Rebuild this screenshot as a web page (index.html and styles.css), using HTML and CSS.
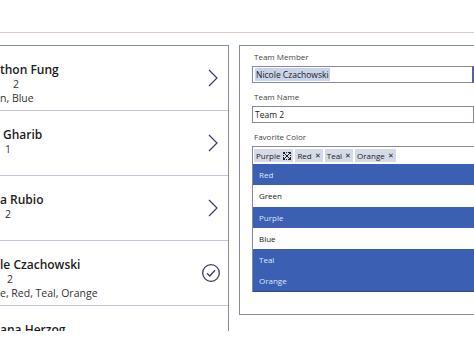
FILE: index.html
```html
<!DOCTYPE html>
<html>
    <head>
        <meta charset="utf-8" />
        <title>Team Members</title>
        <link rel="stylesheet" href="styles.css">
    </head>

    <body>
        <div class="m-top"></div>

        <div class="m-main">
            <ul class="m-list">
                <li>
                    <div class="txt">
                        <p class="name">thon Fung</p>
                        <p class="sub sub-a">2</p>
                        <p class="sub">n, Blue</p>
                    </div>
                    <svg class="ico" width="14" height="20" viewBox="0 0 14 20"><path d="M3 2 L11 10 L3 18" fill="none" stroke="#3b3b68" stroke-width="1.2"/></svg>
                </li>
                <li>
                    <div class="txt">
                        <p class="name name-b">Gharib</p>
                        <p class="sub sub-b">1</p>
                    </div>
                    <svg class="ico" width="14" height="20" viewBox="0 0 14 20"><path d="M3 2 L11 10 L3 18" fill="none" stroke="#3b3b68" stroke-width="1.2"/></svg>
                </li>
                <li>
                    <div class="txt">
                        <p class="name">a Rubio</p>
                        <p class="sub sub-b">2</p>
                    </div>
                    <svg class="ico" width="14" height="20" viewBox="0 0 14 20"><path d="M3 2 L11 10 L3 18" fill="none" stroke="#3b3b68" stroke-width="1.2"/></svg>
                </li>
                <li>
                    <div class="txt">
                        <p class="name">le Czachowski</p>
                        <p class="sub sub-c">2</p>
                        <p class="sub">e, Red, Teal, Orange</p>
                    </div>
                    <svg class="ico ico-chk" width="20" height="20" viewBox="0 0 20 20"><circle cx="10" cy="10" r="8.3" fill="none" stroke="#3b3b68" stroke-width="1.3"/><path d="M6 10.2 L8.8 13 L14 7.2" fill="none" stroke="#3b3b68" stroke-width="1.3"/></svg>
                </li>
                <li>
                    <div class="txt">
                        <p class="name">ana Herzog</p>
                    </div>
                </li>
            </ul>

            <div class="m-form">
                <label>Team Member</label>
                <div class="inp inp-focus"><span class="sel">Nicole Czachowski</span></div>

                <label>Team Name</label>
                <div class="inp">Team 2</div>

                <label>Favorite Color</label>
                <div class="combo">
                    <div class="chips">
                        <span class="chip">Purple <i class="x"></i></span>
                        <span class="chip">Red <b>&#x2715;</b></span>
                        <span class="chip">Teal <b>&#x2715;</b></span>
                        <span class="chip">Orange <b>&#x2715;</b></span>
                    </div>
                    <ul class="opts">
                        <li class="on">Red</li>
                        <li>Green</li>
                        <li class="on">Purple</li>
                        <li>Blue</li>
                        <li class="on">Teal</li>
                        <li class="on">Orange</li>
                    </ul>
                </div>
            </div>
        </div>
    </body>
</html>
```

FILE: styles.css
```css
*{margin:0;padding:0;box-sizing:border-box;}
li{list-style:none;}

body{width:474px;height:363px;overflow:hidden;background:#fff;font-family:"Open Sans","Noto Sans",sans-serif;color:#222;}

.m-top{height:33px;border-bottom:1px solid #dccdd5;}

.m-main{display:flex;gap:10px;padding-top:12px;}

.m-list{width:229px;height:286px;overflow:hidden;border:1px solid #8a8aa6;border-left:none;border-bottom:none;flex:none;}
.m-list li{display:flex;align-items:center;height:65px;border-bottom:1px solid #c4c4d2;padding-right:8px;}
.m-list .txt{flex:1;align-self:flex-start;padding-top:17px;}
.m-list p{line-height:14px;white-space:nowrap;}
.m-list .name{font-size:12px;font-weight:600;color:#1c1c1c;}
.m-list .name-b{padding-left:3px;}
.m-list .sub{font-size:10.5px;color:#333;}
.m-list .sub-a{padding-left:13px;}
.m-list .sub-b{padding-left:5px;}
.m-list .sub-c{padding-left:7px;}
.m-list .ico{flex:none;margin-right:0;}
.m-list .ico-chk{margin-right:-1px;}

.m-form{flex:1;height:270px;border:1px solid #8a8aa6;border-right:none;padding:5px 0 0 12px;display:flex;flex-direction:column;min-width:260px;}
.m-form label{font-size:8px;color:#444;line-height:12px;margin-left:2px;}
.m-form .inp{height:17px;border:1px solid #8888a4;margin:3px 0 8px;font-size:8.5px;line-height:15px;padding-left:2px;width:222px;color:#222;}
.m-form .inp-focus{border-right:2px solid #4a64a8;}
.m-form .sel{background:#c7d4ea;padding:1px 1px;}

.combo{margin-top:3px;width:240px;border:1px solid #8888a4;border-bottom:none;}
.chips{display:flex;gap:2px;height:17px;align-items:center;padding-left:1px;}
.chip{background:#d5dbe6;font-size:8px;line-height:13px;padding:0 2px;color:#222;display:flex;align-items:center;gap:3px;}
.chip b{font-weight:normal;font-size:7px;}
.x{display:inline-block;width:8px;height:8px;border:1px dotted #222;background:
  linear-gradient(45deg,transparent 44%,#222 44%,#222 56%,transparent 56%),
  linear-gradient(-45deg,transparent 44%,#222 44%,#222 56%,transparent 56%);}

.opts li{height:21.3px;line-height:21px;font-size:8px;padding-left:6px;color:#222;background:#fff;}
.opts li.on{background:#3a5fb3;color:#dfe6f6;}
.opts li:last-child{border-bottom:1px solid #2c4a90;}
```
